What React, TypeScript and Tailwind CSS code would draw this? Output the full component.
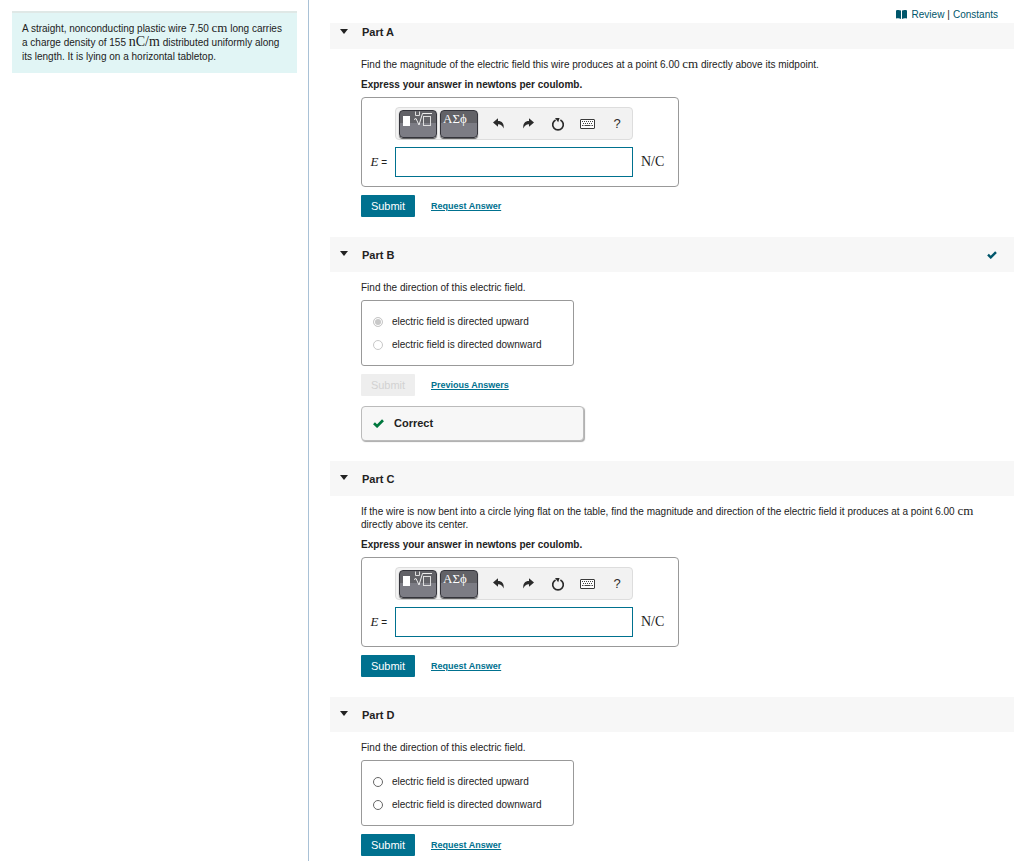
import { useState, type ReactNode } from 'react';

function MathText({ children, large = false }: { children: ReactNode; large?: boolean }) {
  return (
    <span
      className={
        large
          ? "font-['Liberation_Serif',serif] text-[14px] leading-[8px]"
          : "font-['Liberation_Serif',serif] text-[13px] leading-[8px]"
      }
    >
      {children}
    </span>
  );
}

function RootIcon() {
  return (
    <svg width="31" height="16" viewBox="0 0 31 16" fill="none" aria-hidden="true">
      <rect x="1" y="5" width="7" height="10" fill="#fff" />
      <path d="M13.5 0.5V4.5H17.5V0.5" stroke="#ddd" />
      <path d="M12 8.5L14 7.5L17 14L20.5 2.5H30" stroke="#eee" />
      <rect x="21.5" y="5.5" width="7" height="9" stroke="#ddd" />
    </svg>
  );
}

function UndoIcon() {
  return (
    <svg width="12" height="12" viewBox="0 0 12 12" fill="#2b2b2b" aria-hidden="true">
      <path d="M0 4.5L5 0.3V3C9 3 11.3 5.6 10.6 10.6C9.7 8 8 6.4 5 6.3V8.8Z" />
    </svg>
  );
}

function RedoIcon() {
  return (
    <svg width="12" height="12" viewBox="0 0 12 12" fill="#2b2b2b" aria-hidden="true">
      <path d="M12 4.5L7 0.3V3C3 3 0.7 5.6 1.4 10.6C2.3 8 4 6.4 7 6.3V8.8Z" />
    </svg>
  );
}

function ResetIcon() {
  return (
    <svg width="14" height="14" viewBox="0 0 14 14" fill="none" aria-hidden="true">
      <path d="M9.4 2.9A5.3 5.3 0 1 1 4.6 2.9" stroke="#2b2b2b" strokeWidth="1.7" />
      <path d="M4 0.9H8.6L7.2 5.2Z" fill="#2b2b2b" />
    </svg>
  );
}

function KeyboardIcon() {
  return (
    <svg width="15" height="10" viewBox="0 0 15 10" fill="none" aria-hidden="true">
      <rect x="0.5" y="0.5" width="14" height="9" rx="0.5" stroke="#3a3a3a" fill="#fff" />
      <path d="M2 2.5H13M3 4.5H13" stroke="#444" strokeDasharray="1 1" />
      <path d="M2 6.5H3.5M4.5 6.5H10.5M11.5 6.5H13" stroke="#444" />
    </svg>
  );
}

function BookIcon() {
  return (
    <svg width="11" height="9" viewBox="0 0 11 9" fill="#00566b" aria-hidden="true">
      <path d="M0 0.4C1.8 -0.1 3.6 -0.1 5 0.6V8.9C3.6 8.1 1.8 8.1 0 8.5Z" />
      <path d="M11 0.4C9.2 -0.1 7.4 -0.1 6 0.6V8.9C7.4 8.1 9.2 8.1 11 8.5Z" />
    </svg>
  );
}

function CheckIcon({ className }: { className: string }) {
  return (
    <svg viewBox="0 0 11 9" className={className} fill="none" stroke="currentColor" aria-hidden="true">
      <path d="M1 4.2L4.1 7.2L10 1.3" strokeWidth="2.7" />
    </svg>
  );
}

const templateButton =
  'flex h-7 w-[38px] rounded-[4px] border border-[#33333a] bg-linear-to-b from-[#626267] from-45% to-[#7c7c84] to-45% pl-[2px] text-white shadow-[0_1px_1px_#555]';
const toolButton = 'flex h-7 w-[30px] items-center justify-center text-[#2b2b2b]';

function Part({
  name,
  complete = false,
  short = false,
  children,
}: {
  name: string;
  complete?: boolean;
  short?: boolean;
  children: ReactNode;
}) {
  const [open, setOpen] = useState(true);
  return (
    <section>
      <h2
        className={
          short
            ? 'flex h-[26px] items-center bg-[#f7f7f7] pr-[17px] pb-2'
            : 'flex h-[35px] items-center bg-[#f7f7f7] pr-[17px]'
        }
      >
        <button
          type="button"
          aria-expanded={open}
          onClick={() => setOpen(!open)}
          className="flex grow items-center gap-[14px] pl-[10px] text-left text-[11px] leading-4 font-bold text-[#222]"
        >
          <svg width="8" height="7" viewBox="0 0 8 7" fill="#222" aria-hidden="true">
            <path d="M0 0H8L4 5Z" />
          </svg>
          {name}
        </button>
        {complete && <CheckIcon className="h-2 w-[10px] text-[#00566b]" />}
      </h2>
      {open && <div className="pt-[9px] pr-[30px] pl-[31px]">{children}</div>}
    </section>
  );
}

function Actions({ link, disabled = false }: { link: string; disabled?: boolean }) {
  return (
    <div className="mt-2 flex items-center gap-4">
      <button
        type="button"
        disabled={disabled}
        className="h-[22px] w-[54px] rounded-[1px] bg-[#00718f] text-[11px] font-medium text-white disabled:bg-[#eeeeee] disabled:text-[#d2d2d2]"
      >
        Submit
      </button>
      <a href="#answer" className="text-[9px] font-bold text-[#00718f] underline">
        {link}
      </a>
    </div>
  );
}

function FieldAnswer({ id }: { id: string }) {
  return (
    <>
      <p className="mt-[7px] font-bold">Express your answer in newtons per coulomb.</p>
      <div className="mt-[6px] grid h-[90px] w-[318px] grid-cols-[25px_238px_auto] content-center items-center gap-x-2 gap-y-[7px] rounded-[4px] border border-[#999]">
        <div className="col-start-2 flex h-[33px] items-center rounded-[4px] border border-[#ddd] bg-[#f2f2f2] pl-[3px]">
          <div className="flex gap-[3px] pr-[6px]">
            <button type="button" aria-label="Templates" className={templateButton}>
              <RootIcon />
            </button>
            <button
              type="button"
              aria-label="Symbols"
              className={`${templateButton} font-['Liberation_Serif',serif] text-[13px] leading-4`}
            >
              ΑΣϕ
            </button>
          </div>
          <button type="button" aria-label="Undo" className={toolButton}>
            <UndoIcon />
          </button>
          <button type="button" aria-label="Redo" className={toolButton}>
            <RedoIcon />
          </button>
          <button type="button" aria-label="Reset" className={toolButton}>
            <ResetIcon />
          </button>
          <button type="button" aria-label="Keyboard shortcuts" className={toolButton}>
            <KeyboardIcon />
          </button>
          <button type="button" aria-label="Help" className={`${toolButton} text-[13px]`}>
            ?
          </button>
        </div>
        <label htmlFor={id} className="col-start-1 text-right whitespace-nowrap">
          <i>
            <MathText>E</MathText>
          </i>{' '}
          =
        </label>
        <input
          id={id}
          type="text"
          className="h-[30px] w-full border border-[#00718f] bg-white px-2 text-[13px] outline-none"
        />
        <MathText large>N/C</MathText>
      </div>
    </>
  );
}

function DirectionAnswer({ name, answered = false }: { name: string; answered?: boolean }) {
  return (
    <>
      <p>Find the direction of this electric field.</p>
      <fieldset
        disabled={answered}
        className="mt-[6px] w-[213px] rounded-[3px] border border-[#999] py-[9px] pl-[11px]"
      >
        {['upward', 'downward'].map((direction) => (
          <label key={direction} className="flex h-[23px] items-center gap-[9px]">
            <input
              type="radio"
              name={name}
              value={direction}
              defaultChecked={answered && direction === 'upward'}
              className="size-[10px] appearance-none rounded-full border border-[#666] bg-white checked:bg-[#777] checked:shadow-[inset_0_0_0_1px_white] disabled:border-[#c8c8c8] disabled:checked:bg-[#c8c8c8]"
            />
            electric field is directed {direction}
          </label>
        ))}
      </fieldset>
    </>
  );
}

export default function App() {
  return (
    <div className="flex min-h-screen bg-white font-['Liberation_Sans',Arial,sans-serif] text-[10px] leading-[13px] text-[#222]">
      <aside className="w-[309px] shrink-0 border-r border-[#a9c1d6] pt-[11px] pr-[11px] pl-3">
        <p className="border-t-2 border-[#dfe8e6] bg-[#e1f5f5] px-[10px] py-[9px] leading-[14px]">
          A straight, nonconducting plastic wire 7.50 <MathText>cm</MathText> long carries a charge
          density of 155 <MathText large>nC/m</MathText> distributed uniformly along its length. It is
          lying on a horizontal tabletop.
        </p>
      </aside>
      <main className="min-w-0 grow pr-[10px] pl-[21px]">
        <nav className="flex h-[23px] items-center justify-end gap-[3px] pt-[5px] pr-4 text-[#00566b]">
          <BookIcon />
          <a href="#review" className="pl-[2px]">
            Review
          </a>
          <span className="text-[#222]">|</span>
          <a href="#constants">Constants</a>
        </nav>
        <div className="flex flex-col gap-5">
          <Part name="Part A" short>
            <p>
              Find the magnitude of the electric field this wire produces at a point 6.00{' '}
              <MathText>cm</MathText> directly above its midpoint.
            </p>
            <FieldAnswer id="field-a" />
            <Actions link="Request Answer" />
          </Part>
          <Part name="Part B" complete>
            <DirectionAnswer name="direction-b" answered />
            <Actions link="Previous Answers" disabled />
            <div className="mt-[10px] flex h-[35px] w-[223px] items-center gap-[10px] rounded-[4px] border border-[#bbb] bg-[#f7f7f7] pl-[11px] text-[11px] font-bold shadow-[1px_1px_1px_#aaa]">
              <CheckIcon className="h-[9px] w-[11px] text-[#00783e]" />
              Correct
            </div>
          </Part>
          <Part name="Part C">
            <p>
              If the wire is now bent into a circle lying flat on the table, find the magnitude and
              direction of the electric field it produces at a point 6.00 <MathText>cm</MathText>{' '}
              directly above its center.
            </p>
            <FieldAnswer id="field-c" />
            <Actions link="Request Answer" />
          </Part>
          <Part name="Part D">
            <DirectionAnswer name="direction-d" />
            <Actions link="Request Answer" />
          </Part>
        </div>
      </main>
    </div>
  );
}
